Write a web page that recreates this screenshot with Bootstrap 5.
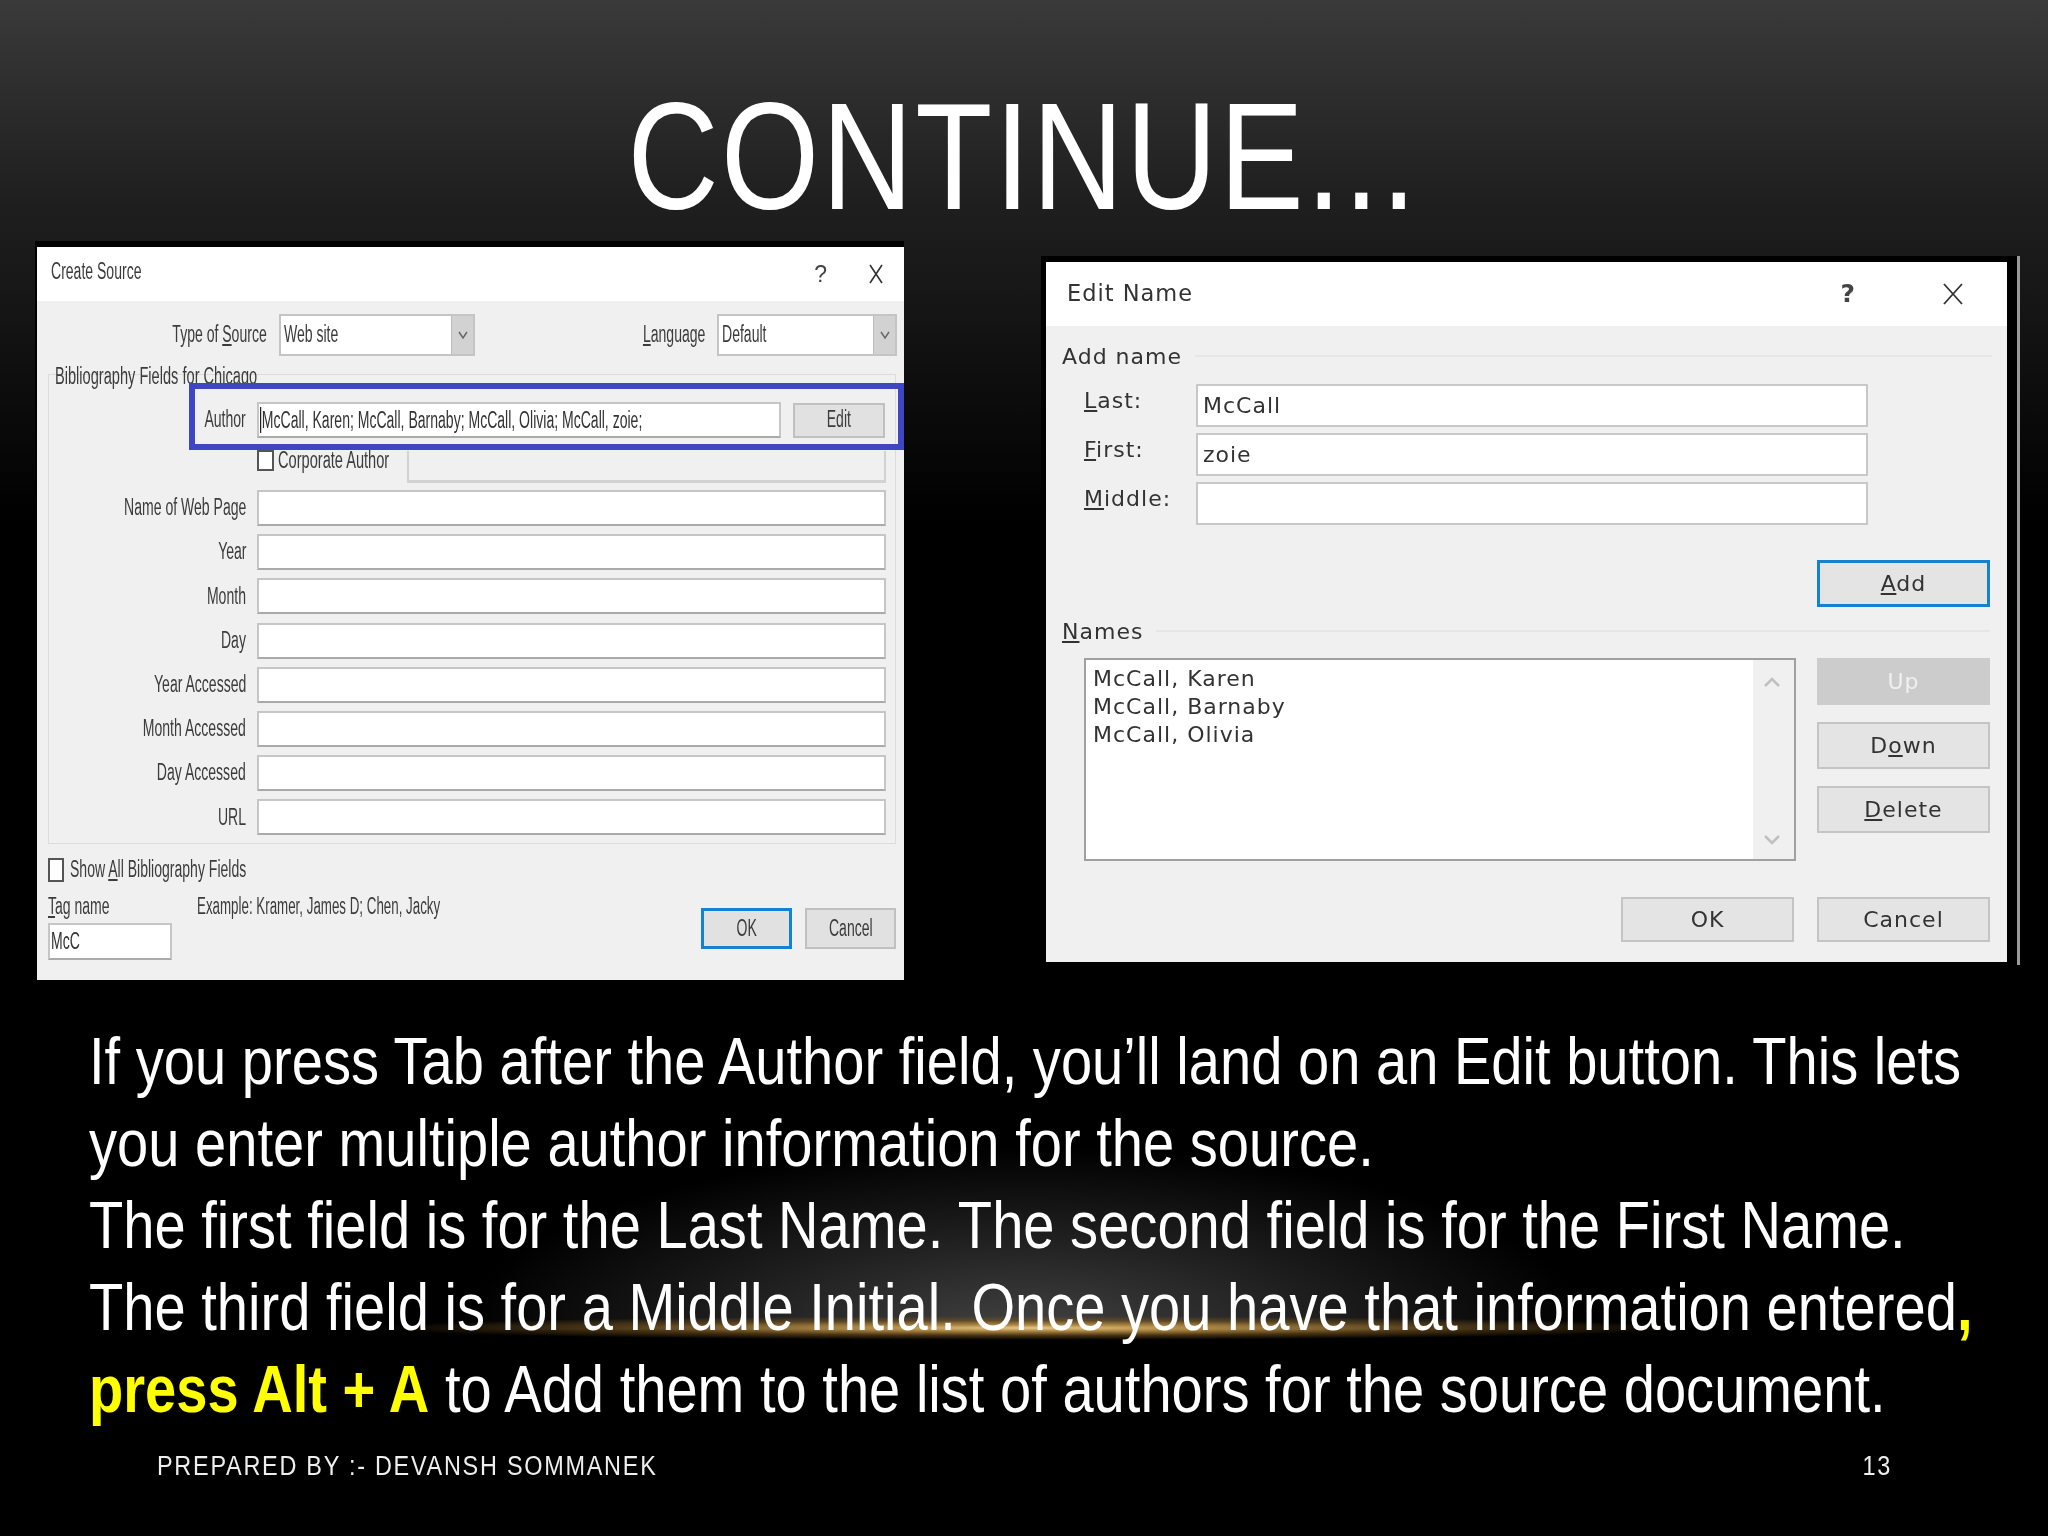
<!DOCTYPE html>
<html lang="en"><head><meta charset="utf-8"><title>Continue</title>
<link href="https://cdn.jsdelivr.net/npm/bootstrap@5.3.0/dist/css/bootstrap.min.css" rel="stylesheet">
<style>
html,body{margin:0;background:#000}
.slidebg{width:2048px;height:1536px;overflow:hidden;color:#fff;font-family:"Liberation Sans",sans-serif;
 background:
 radial-gradient(ellipse closest-side,#e6c88a 0,#b08a45 24%,rgba(120,85,30,.6) 62%,rgba(0,0,0,0) 100%) 370px 1316px/1320px 24px no-repeat,
 radial-gradient(ellipse farthest-side at 50% 100%,#424242 0,#222 45%,rgba(0,0,0,0) 96%) 440px 1140px/1170px 190px no-repeat,
 linear-gradient(#3a3a3a 0,#2c2c2c 100px,#1f1f1f 200px,#161616 300px,#0c0c0c 400px,#000 520px);}
.ttlbox{height:241px;padding-top:80px}
.ttl{font-weight:400;font-size:152px;line-height:1;letter-spacing:3px;text-align:center;margin:0;transform:scaleX(.83);transform-origin:1019px 50%;white-space:nowrap}
.dlgrow{padding-left:35px;height:739px}
.sq{display:inline-block;flex:none;white-space:nowrap;transform:scaleX(.61);transform-origin:0 50%;line-height:1.2}
.sq-e{transform-origin:100% 50%}
.sq-c{transform-origin:50% 50%}
.sq.sq-n{transform:scaleX(.58)}
.sq-up{margin-top:-5px}
.sq.sq-w{transform:scaleX(.635);margin-top:-3px}
.dlgl{flex:none;width:869px;height:739px;border-top:6px solid #000;border-left:2px solid #000;background:#f0f0f0;color:#3c3c3c;font-size:23px;position:relative;filter:blur(.55px)}
.tbarl{height:54px;background:#fff;padding:0 21px 0 14px}
.tbtnq{font-size:23px;color:#444;margin-right:42px}
.rowone{margin-top:13px;height:42px;padding-right:7px}
.seltop{height:42px;background:#fff;border:2px solid #c4c4c4;padding-left:3px}
.selw1{width:196px}.selw2{width:180px}
.selarrow{width:22px;margin-left:auto;background:#d2d2d2;border-left:1px solid #bbb}
.lblw1{width:234px}.lblw2{width:230px}
.grp{margin:18px 8px 0 11px;height:470px;border:1px solid #dcdcdc;padding:27px 9px 0 0;position:relative}
.grpttl{position:absolute;left:6px;top:-16px;width:214px;overflow:hidden}
.lblcol{width:197px;margin-right:11px;flex:none}
.fldrow{height:36px}
.fldrow + .fldrow{margin-top:8.2px}
.fldl.form-control{border-radius:0;border:2px solid #c6c6c6;border-bottom-color:#aaa;background:#fff;padding:0 1px;height:36px;min-height:0;font-size:23px;color:#333;display:flex;align-items:center}
.w524{width:524px;flex:none}
.w132{flex:1 1 auto}
.caret{border-left:2px solid #222;padding-left:1px;height:26px;line-height:26px}
.winbtn.btn{border-radius:0;border:2px solid #c0c0c0;background:#e1e1e1;color:#3c3c3c;padding:0;font-size:23px;display:flex;align-items:center;justify-content:center;flex:none}
.wedit{width:92px;height:35px;margin-left:12px}
.corpr{height:32px;margin:12px 0 8px;padding-left:208px}
.chk{display:block;flex:none;background:#fff;border:2px solid #555}
.chkc{width:17px;height:21px;margin-right:4px}
.chkb{width:16px;height:24px;margin-right:6px}
.corpbox{position:absolute;left:358px;width:479px;top:76px;height:32px;border:solid #d2d2d2;border-width:0 2px 3px 2px;background:#f0f0f0}
.bluebox{position:absolute;left:152px;top:136px;width:715px;height:67px;border:6px solid #3e46c2;pointer-events:none}
.showrow{margin:14px 0 0 11px;height:24px}
.btmrow{margin:11px 8px 0 11px}
.tagcol{width:124px;flex:none}
.taglbl{height:30px;margin-top:-4px;padding-bottom:26px}
.fldl.form-control.tagfld{height:37px;margin-top:4px}
.exmp{margin-left:25px;height:24px;margin-top:-4px}
.btmbtns{margin-left:auto;margin-top:15px;gap:13px}
.wok{width:91px;height:41px}
.wok.focus1.btn{border:3px solid #1780cf}
.dlgrwrap{flex:none;margin:15px 0 0 137px;height:709px;border:solid #000;border-width:6px 10px 0 5px;box-shadow:3px 0 0 #999;filter:blur(.5px)}
.dlgr{width:961px;height:700px;background:#f0f0f0;color:#333;font-family:"DejaVu Sans",sans-serif;font-size:22px;letter-spacing:1px}
.tbarr{height:64px;background:#fff;padding:0 44px 0 21px;font-size:22.5px}
.tbtnr{font-size:25px;font-weight:700;color:#444;margin-right:88px;letter-spacing:0}
.sect{height:30px;padding:0 15px 0 16px}
.sect1{margin-top:15px}
.sect2{margin-top:9px;padding-right:17px}
.sectline{flex:1 1 auto;height:2px;background:#e6e6e6;margin-left:13px}
.namerow{height:43px;margin-left:38px;margin-top:13px}
.namerow + .namerow{margin-top:6px}
.namelbl{width:112px;flex:none;padding-bottom:11px}
.namefld.form-control{width:672px;height:43px;min-height:0;border-radius:0;border:2px solid #c8c8c8;background:#fff;font-size:22px;letter-spacing:1px;color:#333;padding:0 5px;display:flex;align-items:center}
.rpad{padding-right:17px}
.bigbtn.btn{width:173px;height:47px;border-radius:0;border:2px solid #c4c4c4;background:#e4e4e4;color:#333;font-size:22px;letter-spacing:1px;padding:0;flex:none;display:flex;align-items:center;justify-content:center}
.addb.btn{border:3px solid #1780cf;background:#e4e4e4}
.addwrap{margin-top:35px}
.listrow{margin:12px 17px 0 38px}
.listbx{width:712px;height:203px;border:2px solid #a0a0a0;background:#fff;flex:none;padding-left:7px;margin-right:21px}
.listtxt{padding-top:5px;line-height:28px;flex:1 1 auto}
.scrl{width:41px;background:#f0f0f0;flex:none;padding:16px 3px 13px 0}
.btncol{gap:17px}
.upb.btn{background:#cccccc;color:#f0f0f0;border-color:#ccc}
.okrow{margin-top:36px;gap:23px}
.okrow .bigbtn.btn{height:45px}
.bodycopy{margin:40px 0 0 89px;font-size:66px;line-height:82px;white-space:nowrap;transform:scaleX(.85);transform-origin:0 0}
.yel{color:#ff0;font-weight:700}
.foot{margin-top:20px;padding:0 156px 0 157px;height:30px;font-size:27px;line-height:30px;letter-spacing:2px;color:#eee}
.foot .sq{transform:scaleX(.868)}
.foot .sq-e{transform-origin:100% 50%}
</style></head><body>
<div class="slidebg">
 <div class="ttlbox"><h1 class="ttl">CONTINUE...</h1></div>

 <div class="d-flex dlgrow">
  <div class="dlgl">
   <div class="tbarl d-flex align-items-center">
    <span class="sq sq-up">Create Source</span>
    <span class="tbtnq ms-auto">?</span>
    <svg width="14" height="20" viewBox="0 0 14 20"><path d="M1 1 13 19M13 1 1 19" stroke="#333" stroke-width="1.6" fill="none"/></svg>
   </div>
   <div class="rowone d-flex align-items-center">
    <div class="lblw1 d-flex justify-content-end me-2 pe-1"><span class="sq sq-e">Type of <u>S</u>ource</span></div>
    <div class="seltop selw1 d-flex align-items-stretch ms-0"><span class="sq align-self-center">Web site</span>
     <span class="selarrow d-flex align-items-center justify-content-center"><svg width="12" height="10" viewBox="0 0 12 10"><path d="M2 2 6 8 10 2" stroke="#666" stroke-width="1.5" fill="none"/></svg></span></div>
    <div class="lblw2 d-flex justify-content-end"><span class="sq sq-e"><u>L</u>anguage</span></div>
    <div class="seltop selw2 d-flex align-items-stretch ms-auto"><span class="sq align-self-center">Default</span>
     <span class="selarrow d-flex align-items-center justify-content-center"><svg width="12" height="10" viewBox="0 0 12 10"><path d="M2 2 6 8 10 2" stroke="#666" stroke-width="1.5" fill="none"/></svg></span></div>
   </div>
   <div class="grp">
    <div class="grpttl"><span class="sq sq-w">Bibliography Fields for Chicago</span></div>
    <div class="d-flex align-items-center fldrow">
     <div class="lblcol d-flex justify-content-end"><span class="sq sq-e">Author</span></div>
     <div class="fldl form-control w524"><span class="sq caret">McCall, Karen; McCall, Barnaby; McCall, Olivia; McCall, zoie;</span></div>
     <button type="button" class="btn winbtn wedit"><span class="sq sq-c">Edit</span></button>
    </div>
    <div class="d-flex align-items-start corpr">
     <span class="chk chkc"></span><span class="sq sq-w">Corporate Author</span>
    </div>
    <div class="d-flex align-items-center fldrow"><div class="lblcol d-flex justify-content-end"><span class="sq sq-e">Name of Web Page</span></div><div class="fldl form-control w132"></div></div>
    <div class="d-flex align-items-center fldrow"><div class="lblcol d-flex justify-content-end"><span class="sq sq-e">Year</span></div><div class="fldl form-control w132"></div></div>
    <div class="d-flex align-items-center fldrow"><div class="lblcol d-flex justify-content-end"><span class="sq sq-e">Month</span></div><div class="fldl form-control w132"></div></div>
    <div class="d-flex align-items-center fldrow"><div class="lblcol d-flex justify-content-end"><span class="sq sq-e">Day</span></div><div class="fldl form-control w132"></div></div>
    <div class="d-flex align-items-center fldrow"><div class="lblcol d-flex justify-content-end"><span class="sq sq-e">Year Accessed</span></div><div class="fldl form-control w132"></div></div>
    <div class="d-flex align-items-center fldrow"><div class="lblcol d-flex justify-content-end"><span class="sq sq-e">Month Accessed</span></div><div class="fldl form-control w132"></div></div>
    <div class="d-flex align-items-center fldrow"><div class="lblcol d-flex justify-content-end"><span class="sq sq-e">Day Accessed</span></div><div class="fldl form-control w132"></div></div>
    <div class="d-flex align-items-center fldrow"><div class="lblcol d-flex justify-content-end"><span class="sq sq-e">URL</span></div><div class="fldl form-control w132"></div></div>
    <div class="corpbox"></div>
   </div>
   <div class="showrow d-flex align-items-center"><span class="chk chkb"></span><span class="sq">Show <u>A</u>ll Bibliography Fields</span></div>
   <div class="btmrow d-flex align-items-start">
    <div class="tagcol">
     <div class="taglbl"><span class="sq"><u>T</u>ag name</span></div>
     <div class="fldl form-control tagfld"><span class="sq">McC</span></div>
    </div>
    <div class="exmp"><span class="sq sq-n">Example: Kramer, James D; Chen, Jacky</span></div>
    <div class="btmbtns d-flex">
     <button type="button" class="btn winbtn wok focus1"><span class="sq sq-c">OK</span></button>
     <button type="button" class="btn winbtn wok"><span class="sq sq-c">Cancel</span></button>
    </div>
   </div>
   <div class="bluebox"></div>
  </div>

  <div class="dlgrwrap">
   <div class="dlgr">
    <div class="tbarr d-flex align-items-center">
     <span>Edit Name</span>
     <span class="tbtnr ms-auto">?</span>
     <svg width="20" height="22" viewBox="0 0 20 22"><path d="M1 1 19 21M19 1 1 21" stroke="#333" stroke-width="1.8" fill="none"/></svg>
    </div>
    <div class="sect sect1 d-flex align-items-center"><span>Add name</span><span class="sectline"></span></div>
    <div class="namerow d-flex align-items-center"><div class="namelbl"><u>L</u>ast:</div><div class="namefld form-control">McCall</div></div>
    <div class="namerow d-flex align-items-center"><div class="namelbl"><u>F</u>irst:</div><div class="namefld form-control">zoie</div></div>
    <div class="namerow d-flex align-items-center"><div class="namelbl"><u>M</u>iddle:</div><div class="namefld form-control"></div></div>
    <div class="addwrap rpad d-flex justify-content-end"><button type="button" class="btn bigbtn addb"><span><u>A</u>dd</span></button></div>
    <div class="sect sect2 d-flex align-items-center"><span><u>N</u>ames</span><span class="sectline"></span></div>
    <div class="listrow d-flex">
     <div class="listbx d-flex">
      <div class="listtxt">McCall, Karen<br>McCall, Barnaby<br>McCall, Olivia</div>
      <div class="scrl d-flex flex-column justify-content-between align-items-center">
       <svg width="18" height="12" viewBox="0 0 18 12"><path d="M2 10 9 3 16 10" stroke="#c0c0c0" stroke-width="2.5" fill="none"/></svg>
       <svg width="18" height="12" viewBox="0 0 18 12"><path d="M2 2 9 9 16 2" stroke="#c0c0c0" stroke-width="2.5" fill="none"/></svg>
      </div>
     </div>
     <div class="btncol d-flex flex-column">
      <button type="button" class="btn bigbtn upb">Up</button>
      <button type="button" class="btn bigbtn"><span>D<u>o</u>wn</span></button>
      <button type="button" class="btn bigbtn"><span><u>D</u>elete</span></button>
     </div>
    </div>
    <div class="okrow rpad d-flex justify-content-end">
     <button type="button" class="btn bigbtn">OK</button>
     <button type="button" class="btn bigbtn">Cancel</button>
    </div>
   </div>
  </div>
 </div>

 <div class="bodycopy">If you press Tab after the Author field, you’ll land on an Edit button. This lets<br>you enter multiple author information for the source.<br>The first field is for the Last Name. The second field is for the First Name.<br>The third field is for a Middle Initial. Once you have that information entered<span class="yel">,</span><br><span class="yel">press Alt + A</span> to Add them to the list of authors for the source document.</div>

 <div class="foot d-flex justify-content-between">
  <span class="sq">PREPARED BY :- DEVANSH SOMMANEK</span>
  <span class="sq sq-e">13</span>
 </div>
</div>
<script src="https://cdn.jsdelivr.net/npm/bootstrap@5.3.0/dist/js/bootstrap.bundle.min.js"></script>
</body></html>
